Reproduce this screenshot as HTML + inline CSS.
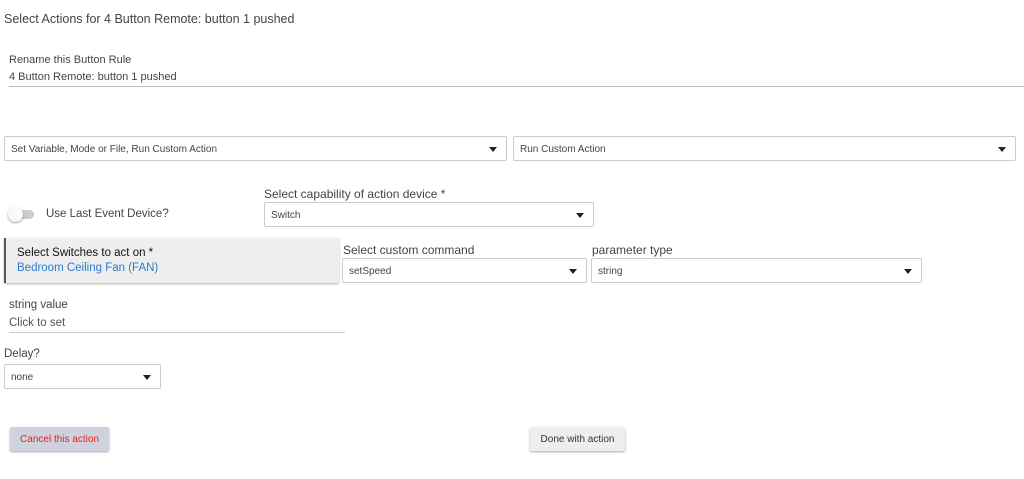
<!DOCTYPE html>
<html><head><style>
*{box-sizing:border-box;margin:0;padding:0}
body{width:1024px;height:479px;background:#fff;font-family:"Liberation Sans",sans-serif;color:#444;position:relative;overflow:hidden}
.a{position:absolute;white-space:nowrap}
.sel{position:absolute;border:1px solid #ccc;border-radius:2px;background:#fff;font-size:10px;color:#444;padding-left:6px;display:flex;align-items:center;padding-top:1px}
.sel:after{content:"";position:absolute;right:9px;top:50%;margin-top:-2px;border-left:4px solid transparent;border-right:4px solid transparent;border-top:5px solid #222}
.lbl{font-size:12px;color:#444}
.btn{position:absolute;font-size:10px;display:flex;align-items:center;justify-content:center;box-shadow:0 1px 2px rgba(0,0,0,.35);border-radius:2px}
</style></head><body>
<div class="a" style="left:4px;top:12px;font-size:12.5px;color:#444">Select Actions for 4 Button Remote: button 1 pushed</div>
<div class="a lbl" style="left:9px;top:54px;font-size:11px">Rename this Button Rule</div>
<div class="a lbl" style="left:9px;top:71px;font-size:11px">4 Button Remote: button 1 pushed</div>
<div class="a" style="left:9px;top:86px;width:1015px;height:1px;background:#bbb"></div>
<div class="sel" style="left:4px;top:136px;width:503px;height:25px">Set Variable, Mode or File, Run Custom Action</div>
<div class="sel" style="left:513px;top:136px;width:503px;height:25px">Run Custom Action</div>
<div class="a" style="left:10px;top:210px;width:24px;height:9px;border-radius:5px;background:#ccc"></div>
<div class="a" style="left:8px;top:207px;width:15px;height:15px;border-radius:50%;background:#fafafa;box-shadow:0 1px 2px rgba(0,0,0,.4)"></div>
<div class="a lbl" style="left:46px;top:208px;font-size:11.5px">Use Last Event Device?</div>
<div class="a lbl" style="left:264px;top:187px">Select capability of action device *</div>
<div class="sel" style="left:264px;top:202px;width:330px;height:25px">Switch</div>
<div class="a" style="left:4px;top:238px;width:335px;height:45px;background:#eee;border-left:2px solid #555;box-shadow:0 1px 2px rgba(0,0,0,.3)"></div>
<div class="a" style="left:17px;top:247px;font-size:11.5px;color:#111">Select Switches to act on *</div>
<div class="a" style="left:17px;top:262px;font-size:11.5px;color:#2a7bd1">Bedroom Ceiling Fan (FAN)</div>
<div class="a lbl" style="left:343px;top:243px">Select custom command</div>
<div class="sel" style="left:342px;top:258px;width:245px;height:25px">setSpeed</div>
<div class="a lbl" style="left:592px;top:243px">parameter type</div>
<div class="sel" style="left:591px;top:258px;width:331px;height:25px">string</div>
<div class="a lbl" style="left:9px;top:299px;font-size:11.5px">string value</div>
<div class="a lbl" style="left:9px;top:317px;font-size:11.5px;color:#555">Click to set</div>
<div class="a" style="left:9px;top:332px;width:336px;height:1px;background:#ccc"></div>
<div class="a lbl" style="left:4px;top:348px;font-size:11.5px">Delay?</div>
<div class="sel" style="left:4px;top:364px;width:157px;height:25px">none</div>
<div class="btn" style="left:10px;top:427px;width:99px;height:24px;background:#cdd2dc;color:#e82020">Cancel this action</div>
<div class="btn" style="left:530px;top:427px;width:95px;height:24px;background:#eee;color:#333">Done with action</div>
</body></html>
